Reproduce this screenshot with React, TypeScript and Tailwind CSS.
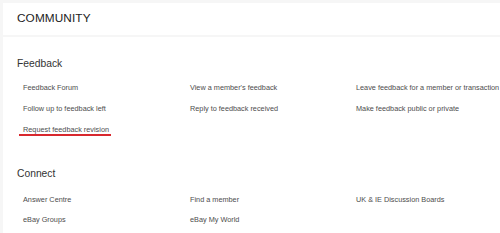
import React from "react";

const feedback = [
  ["Feedback Forum", "View a member's feedback", "Leave feedback for a member or transaction"],
  ["Follow up to feedback left", "Reply to feedback received", "Make feedback public or private"],
  ["Request feedback revision", "", ""],
];
const connect = [
  ["Answer Centre", "Find a member", "UK & IE Discussion Boards"],
  ["eBay Groups", "eBay My World", ""],
];

function Rows({ rows, mark }: { rows: string[][]; mark?: string }) {
  return (
    <div className="grid grid-cols-[167px_166px_1fr] pl-[6px]">
      {rows.flat().map((t, i) => (
        <div key={i} className="h-[20.67px] flex items-center text-[7.3px] text-[#4d4d4d] whitespace-nowrap">
          {t === mark ? (
            <span className="relative">
              {t}
              <span className="absolute left-[-4px] right-[-2px] top-[9px] h-[2px] bg-[#d8282e]" />
            </span>
          ) : (
            t
          )}
        </div>
      ))}
    </div>
  );
}

export default function App() {
  return (
    <div
      className="w-[500px] h-[233px] overflow-hidden bg-[#f6f6f6] pt-[3px] pl-[3px]"
      style={{ fontFamily: '"Liberation Sans", Arial, sans-serif' }}
    >
      <div className="bg-white h-[32px] flex items-center pl-[14px] text-[11.8px] text-[#222] tracking-[0.1px]">
        COMMUNITY
      </div>
      <div className="mt-[2px] bg-white pl-[14px] pt-[19px] h-[200px]">
        <div className="text-[10.3px] leading-[16px] text-[#333]">Feedback</div>
        <div className="mt-[6.5px]">
          <Rows rows={feedback} mark="Request feedback revision" />
        </div>
        <div className="mt-[26px] text-[10.3px] leading-[16px] text-[#333]">Connect</div>
        <div className="mt-[7.5px]">
          <Rows rows={connect} />
        </div>
      </div>
    </div>
  );
}
